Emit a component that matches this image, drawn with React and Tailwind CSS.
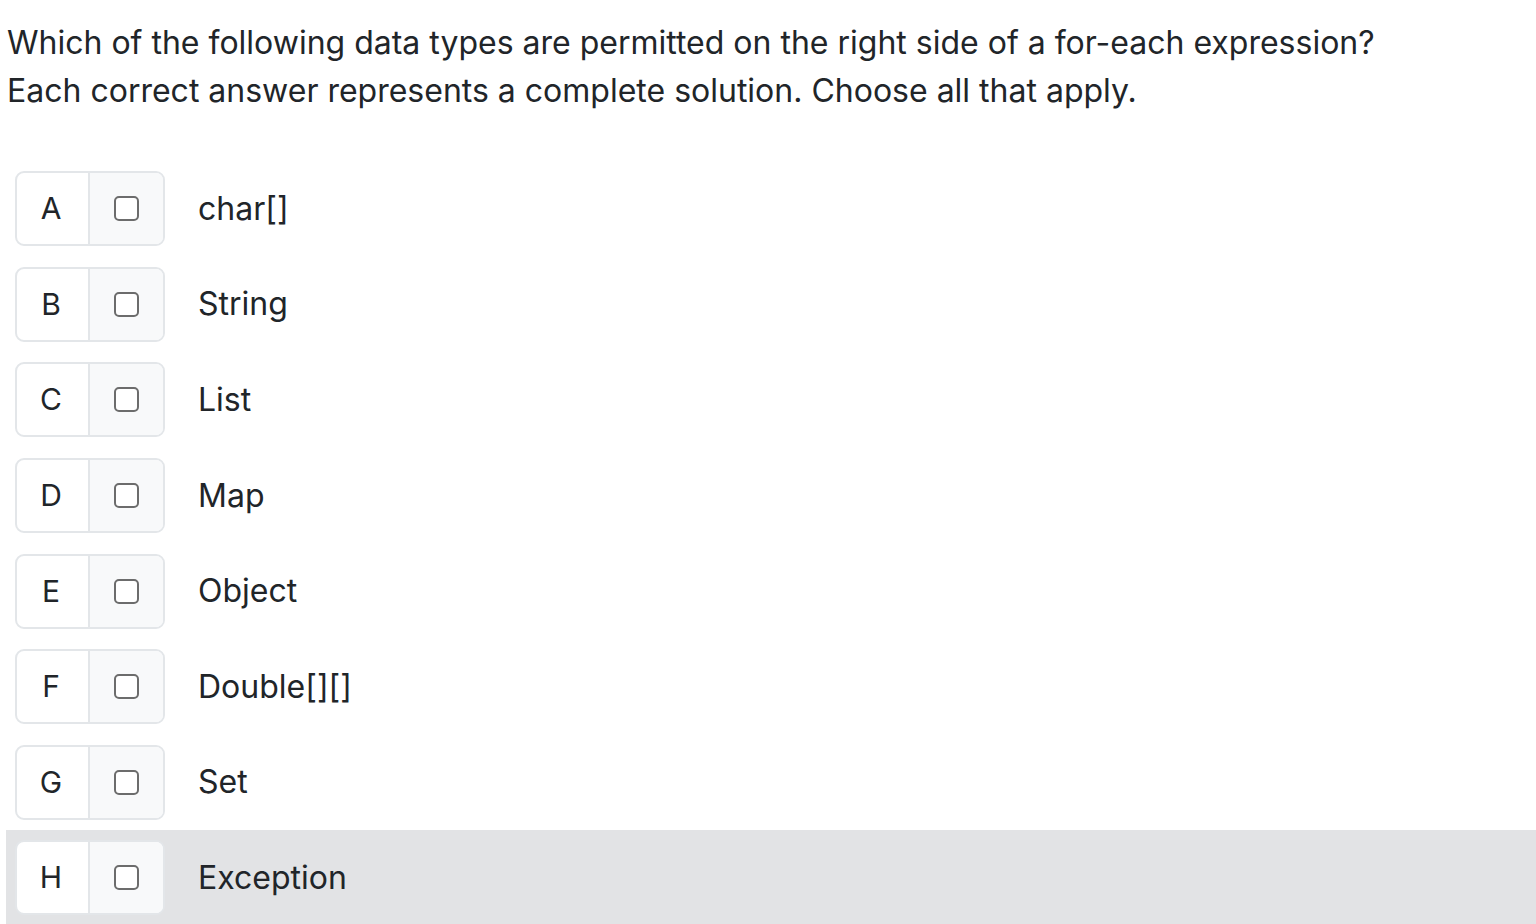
const options = [
  { letter: "A", label: "char[]" },
  { letter: "B", label: "String" },
  { letter: "C", label: "List" },
  { letter: "D", label: "Map" },
  { letter: "E", label: "Object" },
  { letter: "F", label: "Double[][]" },
  { letter: "G", label: "Set" },
  { letter: "H", label: "Exception", active: true },
];

export default function App() {
  return (
    <div className="min-h-screen bg-white pl-[6px] pt-[19px] text-[#212529]" style={{ fontFamily: "Inter, 'Noto Sans', sans-serif" }}>
      <div className="pl-[1px] text-[32px] leading-[48px]">
        <p>Which of the following data types are permitted on the right side of a for-each expression?</p>
        <p>Each correct answer represents a complete solution. Choose all that apply.</p>
      </div>
      <div className="mt-[46px] flex flex-col">
        {options.map((o) => (
          <div key={o.letter} className={`flex h-[95.6px] items-center pl-[9px] ${o.active ? "bg-[#e2e3e5]" : ""}`}>
            <div className="flex h-[75px] overflow-hidden rounded-[9px] border-2 border-[#e3e6e9] bg-white">
              <div className="flex w-[73px] items-center justify-center border-r-2 border-[#e3e6e9] pr-[3px] text-[30px]">{o.letter}</div>
              <div className="flex w-[73px] items-center justify-center bg-[#f8f9fa]">
                <span className="block h-[25px] w-[25px] rounded-[5px] border-2 border-[#6c6c6c] bg-white" />
              </div>
            </div>
            <div className="ml-[33px] text-[32px]">{o.label}</div>
          </div>
        ))}
      </div>
    </div>
  );
}
